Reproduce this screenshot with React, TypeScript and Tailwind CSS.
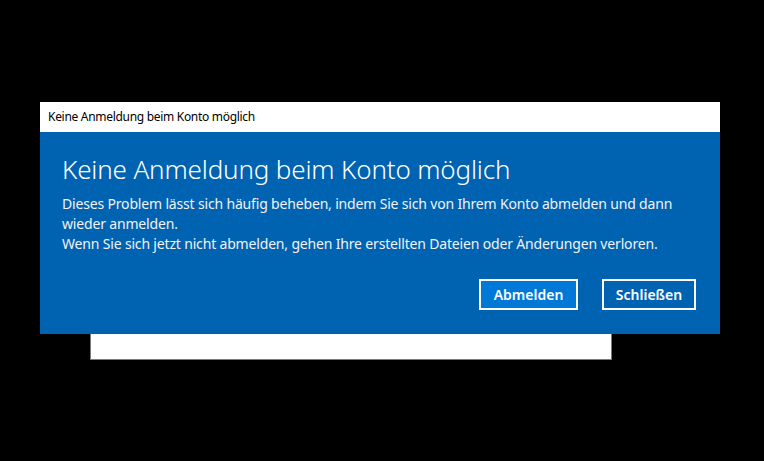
export default function App() {
  return (
    <div
      className="w-[764px] h-[461px] bg-black pt-[102px] pl-[40px] overflow-hidden"
      style={{ fontFamily: '"Noto Sans", "Open Sans", sans-serif' }}
    >
      <div className="w-[680px]">
        <div className="h-[30px] bg-white flex items-center pl-[8px] text-[12px] tracking-[-0.3px] text-black">
          Keine Anmeldung beim Konto möglich
        </div>
        <div className="h-[202px] bg-[#0063b1] pl-[22px] pr-[24px] pt-[20px] flex flex-col">
          <h1 className="text-[26px] font-light leading-[34px] tracking-[-0.15px] text-white">
            Keine Anmeldung beim Konto möglich
          </h1>
          <div className="mt-[8px] text-[14px] leading-[20px] tracking-[-0.17px] text-[#f2f2f2]">
            <p>
              Dieses Problem lässt sich häufig beheben, indem Sie sich von Ihrem Konto abmelden und dann
              wieder anmelden.
            </p>
            <p>Wenn Sie sich jetzt nicht abmelden, gehen Ihre erstellten Dateien oder Änderungen verloren.</p>
          </div>
          <div className="mt-auto mb-[24px] flex justify-end gap-[24px]">
            <button className="w-[99px] h-[31px] border-2 border-white bg-[#0078d7] text-white text-[14px] font-semibold">
              Abmelden
            </button>
            <button className="w-[94px] h-[31px] border-2 border-white bg-[#0063b1] text-white text-[14px] font-semibold">
              Schließen
            </button>
          </div>
        </div>
      </div>
      <div className="ml-[50px] w-[522px] h-[26px] bg-white border border-t-0 border-[#7a7a7a]" />
    </div>
  );
}
